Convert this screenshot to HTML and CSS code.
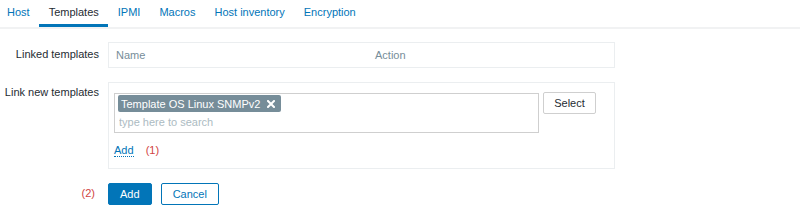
FILE: index.html
```html
<!DOCTYPE html>
<html lang="en">
<head>
  <meta charset="UTF-8" />
  <title>Host - Templates</title>
  <link rel="stylesheet" href="styles.css">
</head>
<body>

  <ul class="tabs">
    <li class="tab"><a href="#">Host</a></li>
    <li class="tab active"><a href="#">Templates</a></li>
    <li class="tab"><a href="#">IPMI</a></li>
    <li class="tab"><a href="#">Macros</a></li>
    <li class="tab"><a href="#">Host inventory</a></li>
    <li class="tab"><a href="#">Encryption</a></li>
  </ul>

  <div class="form">
    <div class="form-row">
      <label class="form-label">Linked templates</label>
      <div class="form-field">
        <div class="box linked">
          <span class="col-name">Name</span>
          <span class="col-action">Action</span>
        </div>
      </div>
    </div>

    <div class="form-row">
      <label class="form-label top">Link new templates</label>
      <div class="form-field">
        <div class="box link-new">
          <div class="ms-line">
            <div class="multiselect">
              <div class="ms-tags">
                <span class="ms-tag">Template OS Linux SNMPv2
                  <svg class="ms-remove" width="8" height="8" viewBox="0 0 8 8">
                    <path d="M1 1 L7 7 M7 1 L1 7" stroke="#fff" stroke-width="2" stroke-linecap="square"/>
                  </svg>
                </span>
              </div>
              <input class="ms-input" type="text" placeholder="type here to search">
            </div>
            <button class="btn-grey">Select</button>
          </div>
          <div class="add-line">
            <a href="#" class="link-action">Add</a>
            <span class="note">(1)</span>
          </div>
        </div>
      </div>
    </div>

    <div class="form-row buttons">
      <span class="form-label note-cell"><span class="note">(2)</span></span>
      <div class="form-field">
        <button class="btn-main">Add</button>
        <button class="btn-alt">Cancel</button>
      </div>
    </div>
  </div>

</body>
</html>
```

FILE: styles.css
```css
body {
  margin: 0;
  font-family: "Liberation Sans", Arial, sans-serif;
  font-size: 11px;
  color: #1f2c33;
  background-color: #ffffff;
}
a {
  color: #0275b8;
  text-decoration: none;
}
.tabs {
  display: flex;
  list-style: none;
  margin: 0;
  padding: 0;
  border-bottom: 2px solid #f1f2f3;
}
.tab {
  padding: 6px 9px 5px 10px;
  line-height: 13px;
  border-bottom: 3px solid transparent;
}
.tab:first-child {
  padding-left: 7px;
}
.tab.active {
  border-bottom-color: #0275b8;
}
.tab.active a {
  color: #1f2c33;
}
.form {
  padding-top: 13px;
}
.form-row {
  display: flex;
  margin-bottom: 14px;
}
.form-label {
  width: 99px;
  padding-right: 9px;
  text-align: right;
  white-space: nowrap;
  line-height: 13px;
  padding-top: 6px;
}
.form-label.top {
  padding-top: 4px;
}
.box {
  border: 1px solid #ebeef0;
}
.linked {
  display: flex;
  height: 24px;
  line-height: 24px;
  padding: 0 7px;
  width: 491px;
  color: #768d99;
}
.col-name {
  width: 259px;
}
.link-new {
  padding: 10px 5px 10px;
  width: 495px;
}
.ms-line {
  display: flex;
  align-items: flex-start;
}
.multiselect {
  width: 423px;
  height: 38px;
  border: 1px solid #cfcfcf;
  background: #fff;
}
.ms-tags {
  padding: 1px 3px 0;
}
.ms-tag {
  display: inline-flex;
  align-items: center;
  height: 17px;
  padding: 0 6px 0 3px;
  background-color: #768d99;
  color: #ffffff;
  border-radius: 2px;
}
.ms-remove {
  margin-left: 7px;
}
.ms-input {
  display: block;
  border: none;
  outline: none;
  margin: 2px 0 0 4px;
  padding: 0;
  height: 16px;
  width: 400px;
  font-family: inherit;
  font-size: 11px;
  color: #1f2c33;
}
.ms-input::placeholder {
  color: #acbbc2;
}
.btn-grey {
  margin: -1px 0 0 4px;
  height: 22px;
  width: 53px;
  padding: 0;
  border: 1px solid #cfcfcf;
  border-radius: 2px;
  background-color: #ffffff;
  color: #1f2c33;
  font-family: inherit;
  font-size: 11px;
}
.add-line {
  margin-top: 11px;
  line-height: 13px;
  padding-bottom: 1px;
}
.link-action {
  border-bottom: 1px dotted #0275b8;
}
.note {
  color: #d14343;
  margin-left: 9px;
}
.note-cell {
  padding-right: 13px;
  width: 95px;
  padding-top: 4px;
}
.note-cell .note {
  margin-left: 0;
}
.btn-main, .btn-alt {
  height: 22px;
  padding: 0 11px;
  border: 1px solid #0275b8;
  border-radius: 2px;
  font-family: inherit;
  font-size: 11px;
  cursor: pointer;
}
.btn-main {
  background-color: #0275b8;
  color: #ffffff;
}
.btn-alt {
  margin-left: 6px;
  background-color: #ffffff;
  color: #0275b8;
}
```
